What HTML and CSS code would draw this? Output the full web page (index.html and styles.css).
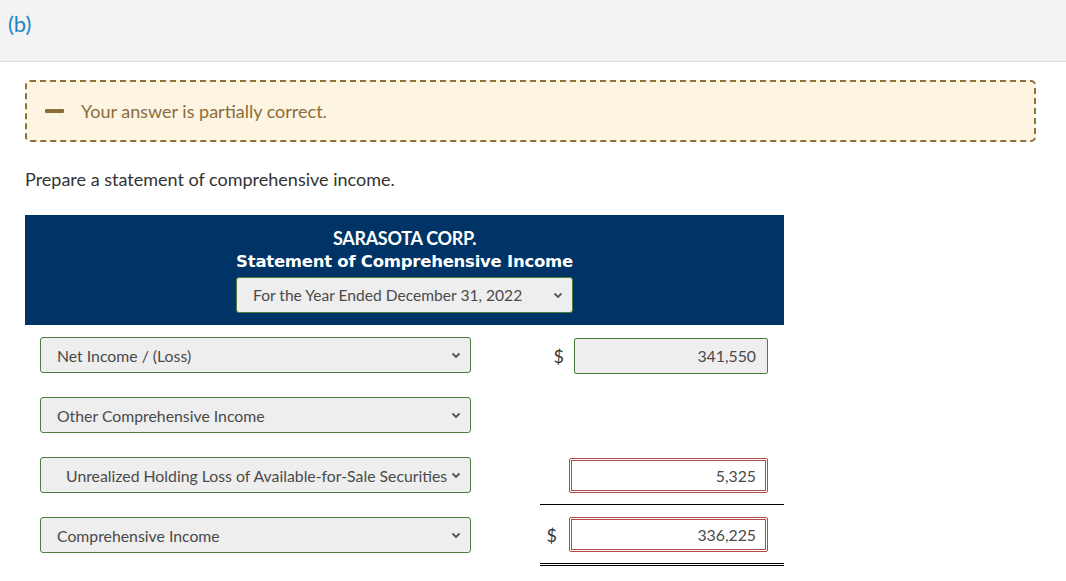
FILE: index.html
```html
<!DOCTYPE html>
<html>
<head>
<meta charset="utf-8">
<link rel="stylesheet" href="styles.css">
</head>
<body>
<div class="part-bar"><span class="part-label">(b)</span></div>

<div class="feedback">
  <span class="feedback-icon"></span>
  <span class="feedback-text">Your answer is partially correct.</span>
</div>

<p class="prompt">Prepare a statement of comprehensive income.</p>

<div class="statement">
  <div class="statement-head">
    <div class="company">SARASOTA CORP.</div>
    <div class="title">Statement of Comprehensive Income</div>
    <div class="dropdown period">
      <span>For the Year Ended December 31, 2022</span>
      <svg class="chev" width="10" height="7" viewBox="0 0 10 7"><path d="M1.5 1.5 L5 5 L8.5 1.5" fill="none" stroke="#555" stroke-width="1.8"/></svg>
    </div>
  </div>

  <div class="row">
    <div class="label-cell">
      <div class="dropdown line"><span>Net Income / (Loss)</span>
        <svg class="chev" width="10" height="7" viewBox="0 0 10 7"><path d="M1.5 1.5 L5 5 L8.5 1.5" fill="none" stroke="#555" stroke-width="1.8"/></svg></div>
    </div>
    <div class="amount-cell">
      <span class="dollar">$</span>
      <div class="amount ok">341,550</div>
    </div>
  </div>

  <div class="row">
    <div class="label-cell">
      <div class="dropdown line"><span>Other Comprehensive Income</span>
        <svg class="chev" width="10" height="7" viewBox="0 0 10 7"><path d="M1.5 1.5 L5 5 L8.5 1.5" fill="none" stroke="#555" stroke-width="1.8"/></svg></div>
    </div>
    <div class="amount-cell"></div>
  </div>

  <div class="row">
    <div class="label-cell">
      <div class="dropdown line indent"><span>Unrealized Holding Loss of Available-for-Sale Securities</span>
        <svg class="chev" width="10" height="7" viewBox="0 0 10 7"><path d="M1.5 1.5 L5 5 L8.5 1.5" fill="none" stroke="#555" stroke-width="1.8"/></svg></div>
    </div>
    <div class="amount-cell rule">
      <div class="amount bad">5,325</div>
    </div>
  </div>

  <div class="row">
    <div class="label-cell">
      <div class="dropdown line"><span>Comprehensive Income</span>
        <svg class="chev" width="10" height="7" viewBox="0 0 10 7"><path d="M1.5 1.5 L5 5 L8.5 1.5" fill="none" stroke="#555" stroke-width="1.8"/></svg></div>
    </div>
    <div class="amount-cell double">
      <span class="dollar bad-dollar">$</span>
      <div class="amount bad">336,225</div>
    </div>
  </div>
</div>
</body>
</html>
```
FILE: styles.css
```css
html, body {
  margin: 0;
  padding: 0;
  background: #ffffff;
  font-family: Lato, "Open Sans", Arial, sans-serif;
  color: #333333;
}

.part-bar {
  height: 61px;
  background: #f3f3f3;
  border-bottom: 1px solid #dddddd;
}

.part-label {
  display: inline-block;
  padding: 9px 0 0 8px;
  font-size: 22px;
  line-height: 30px;
  color: #1a86c4;
}

.feedback {
  margin: 18px 30px 0 25px;
  height: 62px;
  box-sizing: border-box;
  border: 2px dashed #8f7036;
  border-radius: 5px;
  background: #fdf5e2;
  display: flex;
  align-items: center;
  padding-left: 18px;
}

.feedback-icon {
  display: inline-block;
  width: 19px;
  height: 4px;
  background: #8c6d37;
  border-radius: 1px;
}

.feedback-text {
  margin-left: 17px;
  font-size: 18px;
  color: #8a6d3b;
}

.prompt {
  margin: 25px 0 0 25px;
  font-size: 18px;
  line-height: 24px;
  color: #333333;
}

.statement {
  margin: 24px 0 0 25px;
  width: 759px;
}

.statement-head {
  background: #003366;
  padding: 12px 0 12px;
  display: flex;
  flex-direction: column;
  align-items: center;
  color: #ffffff;
}

.company {
  font-size: 18px;
  font-weight: 700;
  line-height: 23px;
  letter-spacing: -0.3px;
}

.title {
  font-family: "DejaVu Sans", Verdana, sans-serif;
  font-weight: 700;
  font-size: 16.5px;
  line-height: 23px;
  letter-spacing: -0.25px;
}

.dropdown {
  box-sizing: border-box;
  height: 36px;
  background: #eeeeee;
  border: 1px solid #4a7d3e;
  border-radius: 3px;
  display: flex;
  align-items: center;
  justify-content: space-between;
  font-size: 15.8px;
  color: #4a4a4a;
}

.period {
  margin-top: 4px;
  width: 337px;
  padding: 0 9px 0 16px;
  font-size: 15.6px;
}

.line {
  width: 431px;
  padding: 0 9px 0 16px;
}

.line.indent {
  padding-left: 25px;
}

.chev {
  flex: none;
}

.row {
  display: flex;
}

.label-cell {
  width: 515px;
  padding: 12px 0 12px 15px;
  box-sizing: border-box;
}

.amount-cell {
  width: 244px;
  box-sizing: border-box;
  padding: 12px 16px 11px 0;
  display: flex;
  align-items: center;
  justify-content: flex-end;
}

.amount-cell.rule {
  border-bottom: 1px solid #000000;
}

.amount-cell.double {
  border-bottom: 3px double #000000;
}

.dollar {
  font-size: 18px;
  color: #333333;
  margin-right: 10px;
}

.dollar.bad-dollar {
  margin-right: 12px;
}

.amount {
  box-sizing: border-box;
  height: 36px;
  display: flex;
  align-items: center;
  justify-content: flex-end;
  font-size: 15.8px;
  color: #4a4a4a;
  padding-right: 11px;
}

.amount.ok {
  width: 194px;
  background: #eeeeee;
  border: 1px solid #4a7d3e;
  border-radius: 2px;
}

.amount.bad {
  width: 199px;
  height: 35px;
  background: #ffffff;
  border: 3px double #b24a4a;
  border-radius: 2px;
  padding-right: 9px;
}
```
